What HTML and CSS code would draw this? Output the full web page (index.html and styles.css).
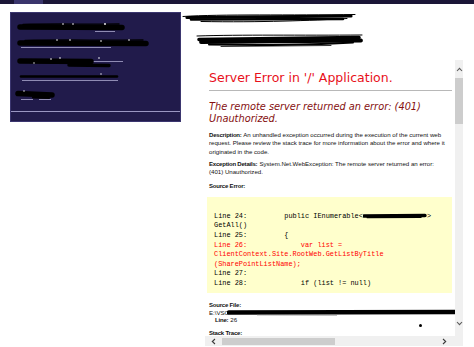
FILE: index.html
```html
<!DOCTYPE html>
<html lang="en">
<head>
<meta charset="utf-8">
<title>Server Error</title>
<link rel="stylesheet" href="styles.css">
</head>
<body>
<div class="topbar"><span class="tab"></span></div>
<div class="main">
  <aside class="panel">
    <div class="panel-body">
      <svg class="panel-redact" width="169" height="98" viewBox="0 0 169 98">
        <g fill="#8f8bb3">
          <rect x="84" y="18" width="20" height="1"/>
          <rect x="10" y="34" width="90" height="1"/>
          <rect x="80" y="48" width="32" height="1"/>
          <rect x="11" y="67" width="96" height="1"/>
          <rect x="10" y="86" width="12" height="1"/>
          <rect x="28" y="86" width="12" height="1"/>
        </g>
        <g stroke="#000" stroke-linecap="round" fill="none">
          <path d="M9 14 L111 14.5" stroke-width="5.5"/>
          <path d="M12 11.5 C40 10.5, 80 11.5, 108 11" stroke-width="1.4"/>
          <path d="M9 30 L135 30.5" stroke-width="5.5"/>
          <path d="M14 27.5 C50 26.5, 90 27.5, 132 27" stroke-width="1.4"/>
          <path d="M9 48 L80 48.5" stroke-width="5.5"/>
          <path d="M58 52 L98 52.5" stroke-width="3.5"/>
          <path d="M10 63.5 L106 63.5" stroke-width="2.6"/>
          <path d="M7 80.5 L41 82" stroke-width="5.5"/>
          <path d="M22 84.5 L38 85" stroke-width="2.2"/>
        </g>
        <g fill="#fff">
          <circle cx="52" cy="11" r="0.8"/>
          <circle cx="62" cy="11" r="0.8"/>
          <circle cx="94" cy="11" r="0.9"/>
          <circle cx="46" cy="27" r="0.8"/>
          <circle cx="59" cy="27" r="0.8"/>
          <circle cx="90" cy="28" r="0.8"/>
          <circle cx="118" cy="27" r="0.8"/>
          <circle cx="40" cy="46" r="0.8"/>
          <circle cx="49" cy="45" r="0.8"/>
          <circle cx="88" cy="45" r="0.8"/>
          <circle cx="23" cy="50" r="0.7"/>
          <circle cx="90" cy="61" r="0.7"/>
          <circle cx="13" cy="78" r="0.7"/>
        </g>
      </svg>
    </div>
    <div class="panel-foot"></div>
  </aside>

  <section class="content-col">
    <svg class="head-redact" width="293" height="56" viewBox="0 0 293 56">
      <g stroke="#000" stroke-linecap="round" fill="none">
        <path d="M2 12.5 C40 10, 110 11.5, 174 10.5" stroke-width="1"/>
        <path d="M6 13.5 L170 12" stroke-width="3.2"/>
        <path d="M10 15.5 L162 15" stroke-width="2.6"/>
        <path d="M20 17.5 C80 18.5, 130 16.5, 166 14.5" stroke-width="1"/>
        <path d="M16 32 C60 30.5, 120 31.5, 181 31" stroke-width="1"/>
        <path d="M18 35.5 L178 33.5" stroke-width="3.6"/>
        <path d="M20 38 L180 36.5" stroke-width="3.8"/>
        <path d="M28 40.5 C90 41.5, 140 40.5, 172 38.5" stroke-width="2"/>
        <path d="M40 42.5 L150 41.5" stroke-width="0.8"/>
      </g>
    </svg>

    <div class="pane">
      <div class="page">
        <h1>Server Error in '/' Application.</h1>
        <hr>
        <h2>The remote server returned an error: (401) Unauthorized.</h2>
        <p class="info desc"><b>Description:</b> An unhandled exception occurred during the execution of the current web request. Please review the stack trace for more information about the error and where it originated in the code.</p>
        <p class="info exc"><b>Exception Details:</b> System.Net.WebException: The remote server returned an error: (401) Unauthorized.</p>
        <p class="info label-src"><b>Source Error:</b></p>
        <pre class="code">Line 24:         public IEnumerable&lt;<svg class="code-redact" width="64" height="6" viewBox="0 0 64 6"><path d="M1 3 L62 2.5" stroke="#000" stroke-width="3.4" stroke-linecap="round"/><path d="M4 4.6 L58 4.4" stroke="#000" stroke-width="1.2" stroke-linecap="round"/></svg>&gt;
GetAll()
Line 25:         {
<span class="err">Line 26:             var list =
ClientContext.Site.RootWeb.GetListByTitle
(SharePointListName);</span>
Line 27:
Line 28:             if (list != null)</pre>
        <p class="info src"><b>Source File:</b><br>E:\VSO<svg class="path-redact" width="232" height="7" viewBox="0 0 232 7"><path d="M2 3.5 L230 3" stroke="#000" stroke-width="4.6" stroke-linecap="round"/><path d="M30 6 L110 6.3" stroke="#777" stroke-width="0.6"/></svg><br><span class="indent"><b>Line:</b> 26</span></p>
        <p class="info label-stack"><b>Stack Trace:</b></p>
      </div>

      <div class="vscroll">
        <div class="vbtn up"><svg width="7" height="5" viewBox="0 0 7 5"><path d="M1 4 L3.5 1.3 L6 4" fill="none" stroke="#5a5a5a" stroke-width="1.1"/></svg></div>
        <div class="vthumb"></div>
        <div class="spacer"></div>
        <div class="vbtn down"><svg width="7" height="5" viewBox="0 0 7 5"><path d="M1 1 L3.5 3.7 L6 1" fill="none" stroke="#5a5a5a" stroke-width="1.1"/></svg></div>
      </div>
      <div class="hscroll">
        <div class="hbtn"><svg width="5" height="7" viewBox="0 0 5 7"><path d="M4 1 L1.3 3.5 L4 6" fill="none" stroke="#3a3a3a" stroke-width="1.1"/></svg></div>
        <div class="hthumb"></div>
        <div class="spacer"></div>
        <div class="hbtn"><svg width="5" height="7" viewBox="0 0 5 7"><path d="M1 1 L3.7 3.5 L1 6" fill="none" stroke="#3a3a3a" stroke-width="1.1"/></svg></div>
      </div>
      <div class="corner"></div>
      <span class="cursor-dot"></span>
    </div>
  </section>
</div>
</body>
</html>
```

FILE: styles.css
```css
* { box-sizing: border-box; }
html, body { margin: 0; padding: 0; background: #fff; }
body {
  width: 474px;
  height: 347px;
  overflow: hidden;
  font-family: "DejaVu Sans", Verdana, sans-serif;
}

.topbar { height: 4px; background: #1b1637; padding-left: 14px; }
.tab { display: block; width: 29px; height: 4px; background: #3a356c; }

.main { display: flex; align-items: flex-start; }

.panel {
  margin: 8px 0 0 10px;
  width: 171px;
  border: 1px solid #3b366f;
  background: #211b4b;
  display: flex;
  flex-direction: column;
}
.panel-body { height: 98px; }
.panel-body svg { display: block; }
.panel-foot { height: 10px; border-top: 1px solid #9a96c2; }

.content-col { width: 293px; display: flex; flex-direction: column; }
.head-redact { display: block; }

.pane {
  position: relative;
  margin-left: 24px;
  width: 258px;
  height: 286px;
  display: grid;
  grid-template-columns: 1fr 8px;
  grid-template-rows: 1fr 10px;
}
.page {
  grid-row: 1;
  grid-column: 1;
  overflow: hidden;
  padding: 0 3px 0 2px;
}

h1 {
  margin: 11px 0 0 2px;
  font: normal 12.5px/14px "DejaVu Sans", Verdana, sans-serif;
  color: #e8101a;
  white-space: nowrap;
}
hr {
  margin: 5px 0 0 2px;
  border: 0;
  border-top: 1px solid #b8b8b8;
  height: 0;
}
h2 {
  margin: 10px 0 0 2px;
  font: italic normal 9.8px/11.5px "DejaVu Sans", Verdana, sans-serif;
  color: #851010;
}

.info {
  margin: 0 0 0 2px;
  max-width: 236px;
  font: 6.1px/8.3px "Liberation Sans", Arial, sans-serif;
  color: #111;
}
.info b { font-weight: bold; font-size: 6px; letter-spacing: -0.2px; margin-right: 0.3px; }
.desc { margin-top: 7px; }
.exc { margin-top: 4px; }
.label-src { margin-top: 6px; }

.code {
  margin: 6px 0 0 0;
  padding: 15px 0 4px 7px;
  background: #ffffcc;
  font: 6.9px/9.6px "Liberation Mono", "Courier New", monospace;
  color: #000;
  white-space: pre;
  overflow: hidden;
}
.code .err { color: #f00; }
.code-redact { vertical-align: -1px; }

.src { margin-top: 8px; line-height: 7px; white-space: nowrap; max-width: none; }
.path-redact { vertical-align: -1px; margin-left: -2px; }
.indent { padding-left: 6px; }
.label-stack { margin-top: 5px; }

.vscroll {
  grid-row: 1;
  grid-column: 2;
  background: #f0f0f0;
  display: flex;
  flex-direction: column;
  padding-bottom: 5px;
}
.vbtn { height: 18px; display: flex; align-items: center; justify-content: center; }
.vbtn.down { height: 16px; }
.vthumb { height: 46px; background: #cdcdcd; }
.spacer { flex: 1; }

.hscroll {
  grid-row: 2;
  grid-column: 1;
  background: #f0f0f0;
  display: flex;
  align-items: center;
  padding-right: 3px;
}
.hbtn { width: 16px; height: 10px; display: flex; align-items: center; justify-content: center; }
.hthumb { width: 113px; height: 7px; margin-left: 1px; background: #cdcdcd; }
.corner { grid-row: 2; grid-column: 2; background: #f0f0f0; }

.cursor-dot {
  position: absolute;
  left: 214px;
  top: 264px;
  width: 3px;
  height: 3px;
  border-radius: 50%;
  background: #000;
}
```
